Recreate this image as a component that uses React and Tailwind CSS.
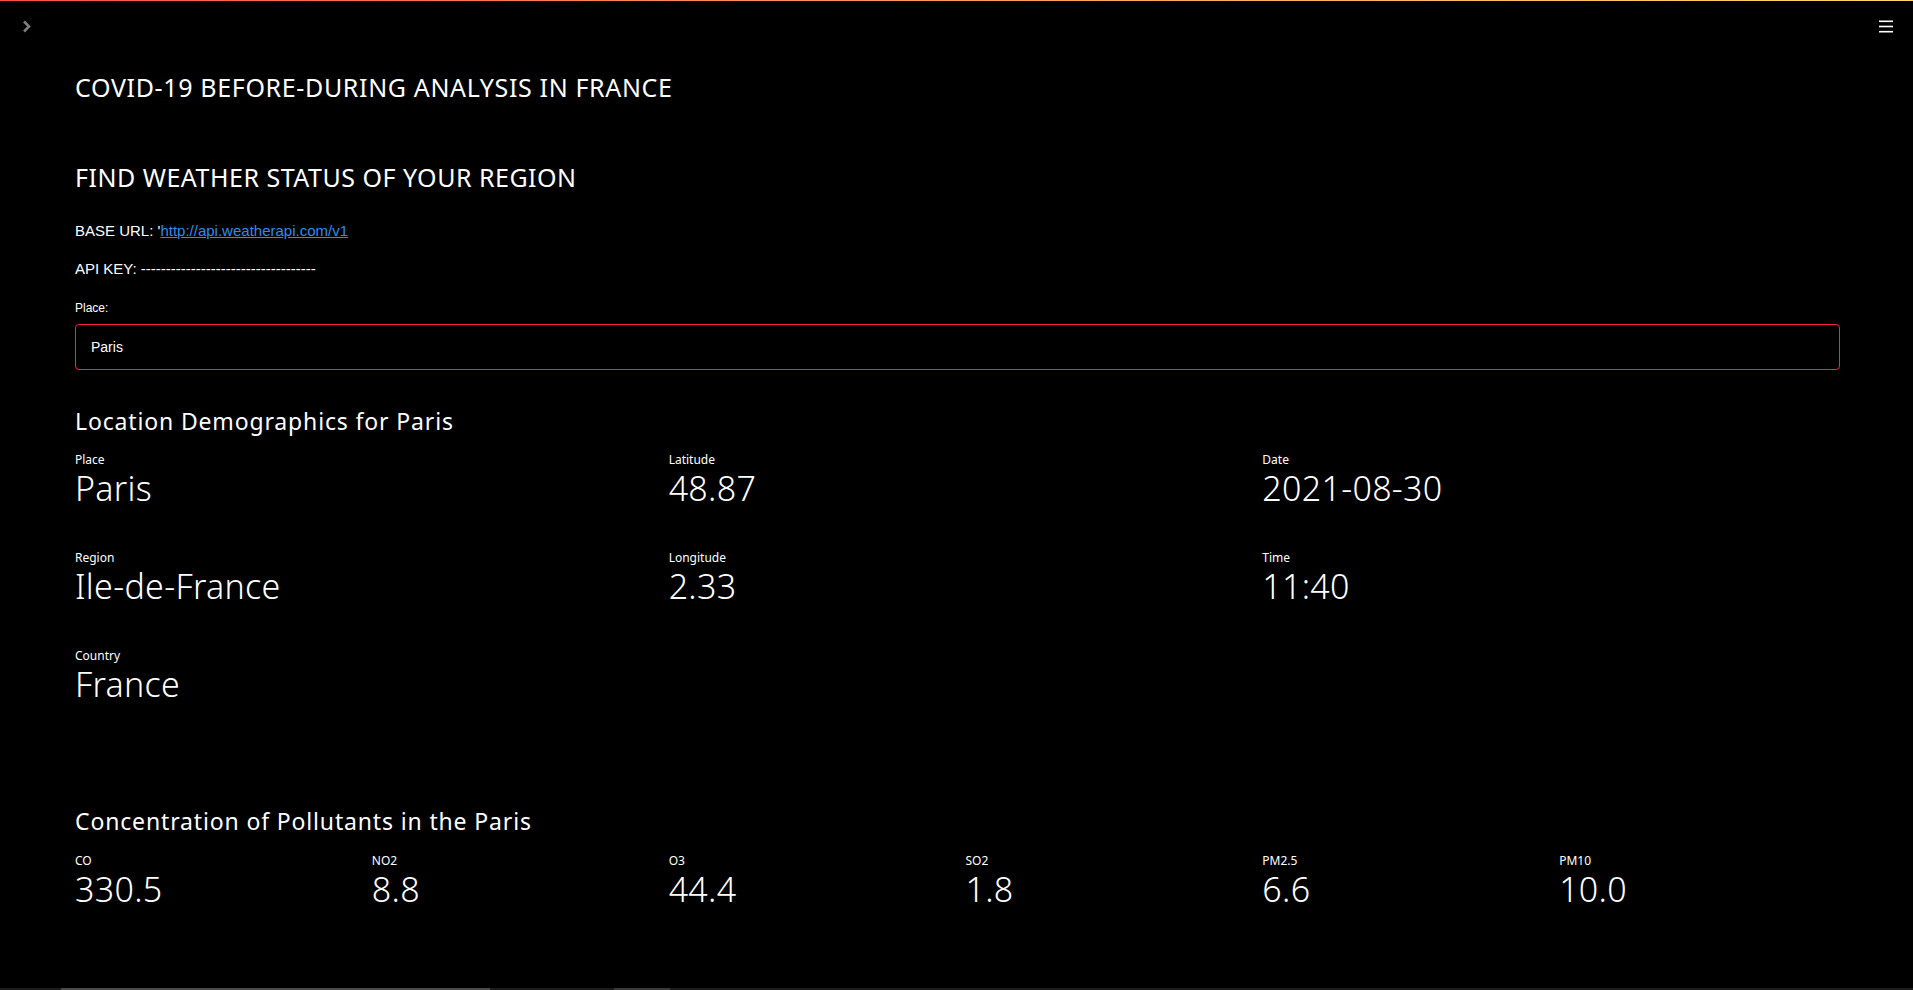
export default function App() {
  const plex = { fontFamily: '"Noto Sans", Roboto, sans-serif' };
  const arial = { fontFamily: '"Liberation Sans", Arial, sans-serif' };

  const Metric = ({ label, value }) => (
    <div className="flex flex-col">
      <div className="text-[12px] leading-[16px] text-white" style={plex}>{label}</div>
      <div className="text-[34px] leading-[40px] text-white font-light tracking-[0.3px]" style={plex}>{value}</div>
    </div>
  );

  const pollutants = [
    ["CO", "330.5"],
    ["NO2", "8.8"],
    ["O3", "44.4"],
    ["SO2", "1.8"],
    ["PM2.5", "6.6"],
    ["PM10", "10.0"],
  ];

  return (
    <div className="min-h-screen w-full bg-black text-white flex flex-col">
      <div className="h-px w-full bg-gradient-to-r from-[#ff4b4b] to-[#ffd86a]" />
      <div className="flex justify-between items-start pl-[22px] pr-[20px] pt-[19px]">
        <svg width="10" height="13" viewBox="0 0 10 13" className="block">
          <path d="M2 1.5 L7 6.5 L2 11.5" fill="none" stroke="#7d7d7d" strokeWidth="2.6" strokeLinecap="butt" strokeLinejoin="miter" />
        </svg>
        <svg width="14" height="13" viewBox="0 0 14 13" className="block">
          <rect x="0" y="0.5" width="14" height="1.6" fill="#ffffff" />
          <rect x="0" y="5.7" width="14" height="1.6" fill="#ffffff" />
          <rect x="0" y="10.9" width="14" height="1.6" fill="#ffffff" />
        </svg>
      </div>

      <div className="flex-1 pl-[75px] pr-[73px]">
        <h1 className="mt-[38px] text-[25px] leading-[32px] text-white tracking-[0.65px]" style={plex}>
          COVID-19 BEFORE-DURING ANALYSIS IN FRANCE
        </h1>
        <h2 className="mt-[58px] text-[25px] leading-[32px] text-white tracking-[0.5px]" style={plex}>
          FIND WEATHER STATUS OF YOUR REGION
        </h2>
        <p className="mt-[28px] text-[15px] leading-[20px] text-white" style={arial}>
          BASE URL: '<a href="#" className="text-[#2b8cf0] underline">http://api.weatherapi.com/v1</a>
        </p>
        <p className="mt-[18px] text-[15px] leading-[20px] text-white" style={arial}>
          API KEY: -----------------------------------
        </p>
        <div className="mt-[21px] text-[12px] leading-[16px] text-white" style={arial}>Place:</div>
        <div className="mt-[8px] h-[46px] w-full border border-[#ff1f4b] rounded-[4px] flex items-center pl-[15px]">
          <span className="text-[14px] text-white" style={arial}>Paris</span>
        </div>

        <h3 className="mt-[36px] text-[23px] leading-[30px] text-white tracking-[0.85px]" style={plex}>
          Location Demographics for Paris
        </h3>
        <div className="mt-[16px] grid grid-cols-3 gap-x-4">
          <div className="flex flex-col gap-[42px]">
            <Metric label="Place" value="Paris" />
            <Metric label="Region" value="Ile-de-France" />
            <Metric label="Country" value="France" />
          </div>
          <div className="flex flex-col gap-[42px]">
            <Metric label="Latitude" value="48.87" />
            <Metric label="Longitude" value="2.33" />
          </div>
          <div className="flex flex-col gap-[42px]">
            <Metric label="Date" value="2021-08-30" />
            <Metric label="Time" value="11:40" />
          </div>
        </div>

        <h3 className="mt-[102px] text-[23px] leading-[30px] text-white tracking-[0.85px]" style={plex}>
          Concentration of Pollutants in the Paris
        </h3>
        <div className="mt-[17px] grid grid-cols-6 gap-x-4">
          {pollutants.map(([l, v]) => (
            <Metric key={l} label={l} value={v} />
          ))}
        </div>
      </div>

      <div className="h-[2px] w-full bg-[#1c1c1c] flex">
        <div className="ml-[61px] w-[429px] bg-[#4a4a4a]" />
        <div className="ml-[124px] w-[56px] bg-[#3a3a3a]" />
      </div>
    </div>
  );
}
